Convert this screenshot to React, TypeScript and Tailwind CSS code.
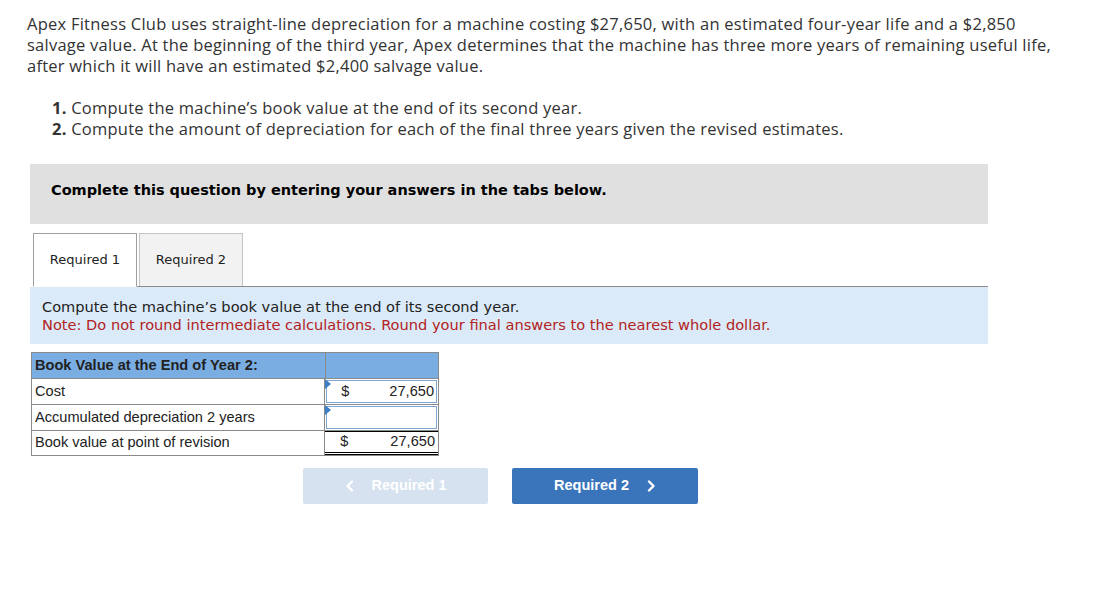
import React from 'react';

const body = { fontFamily: '"Open Sans", "Lato", sans-serif' };
const tahoma = { fontFamily: '"DejaVu Sans", Verdana, sans-serif' };
const arial = { fontFamily: '"Liberation Sans", Arial, sans-serif' };

function Marker() {
  return <span className="absolute left-0 top-0 w-0 h-0 border-t-[5px] border-b-[5px] border-l-[6px] border-t-transparent border-b-transparent border-l-[#3b7fc4]" />;
}

function ValueCell({ value, input }: { value?: string; input?: boolean }) {
  return (
    <div className="relative w-[113px] h-full p-px">
      {input && <Marker />}
      <div className={`flex items-center justify-between h-full pl-[14px] pr-[2px] ${input ? 'border border-[#7fa6d0]' : ''}`}>
        <span>{value ? '$' : ''}</span>
        <span>{value}</span>
      </div>
    </div>
  );
}

function Chevron({ dir }: { dir: 'left' | 'right' }) {
  return (
    <svg width="10" height="12" viewBox="0 0 10 12" fill="none" stroke="currentColor" strokeWidth="2.4" strokeLinecap="round" strokeLinejoin="round">
      {dir === 'right' ? <path d="M3 1.5 L7.5 6 L3 10.5" /> : <path d="M7 1.5 L2.5 6 L7 10.5" />}
    </svg>
  );
}

export default function App() {
  return (
    <div className="w-[1094px] h-[605px] bg-white text-[#333]" style={body}>
      <div className="pl-[27px] pt-[13px] text-[16.5px] leading-[21px] tracking-[0.24px]">
        <p className="text-[#333] whitespace-nowrap">
          Apex Fitness Club uses straight-line depreciation for a machine costing $27,650, with an estimated four-year life and a $2,850<br />
          salvage value. At the beginning of the third year, Apex determines that the machine has three more years of remaining useful life,<br />
          after which it will have an estimated $2,400 salvage value.
        </p>
        <ol className="mt-[21px] pl-[25px]">
          <li><b>1.</b> Compute the machine’s book value at the end of its second year.</li>
          <li><b>2.</b> Compute the amount of depreciation for each of the final three years given the revised estimates.</li>
        </ol>
      </div>

      <div className="ml-[30px] w-[958px] mt-[25px] h-[60px] bg-[#e0e0e0] pl-[21px] pt-[13px]">
        <span className="text-[14.5px] font-bold text-black" style={tahoma}>Complete this question by entering your answers in the tabs below.</span>
      </div>

      <div className="ml-[33px] w-[955px] mt-[9px] flex items-end border-b border-[#8c8c8c] h-[54px]" style={tahoma}>
        <div className="w-[104px] h-[54px] -mb-px bg-white border border-[#a0a0a0] border-b-white flex items-center justify-center text-[13px] text-[#222]">Required 1</div>
        <div className="ml-[2px] w-[104px] h-[53px] bg-[#f2f2f2] border border-[#c4c4c4] border-b-0 flex items-center justify-center text-[13px] text-[#222]">Required 2</div>
      </div>

      <div className="ml-[30px] w-[958px] h-[57px] bg-[#dbeaf8] pl-[12px] pt-[11px] text-[14.6px] leading-[18px]" style={tahoma}>
        <div className="text-[#222]">Compute the machine’s book value at the end of its second year.</div>
        <div className="text-[#b22222]">Note: Do not round intermediate calculations. Round your final answers to the nearest whole dollar.</div>
      </div>

      <div className="ml-[31px] mt-[8px] w-[408px] border border-[#8a8a8a] text-[14.6px] text-[#222]" style={arial}>
        <div className="flex h-[26px] bg-[#7aaee3] border-b border-[#8a8a8a]">
          <div className="w-[294px] border-r border-[#8a8a8a] pl-[3px] flex items-center font-bold">Book Value at the End of Year 2:</div>
          <div className="flex-1" />
        </div>
        <div className="flex h-[26px] border-b border-[#8a8a8a]">
          <div className="w-[294px] border-r border-[#8a8a8a] pl-[3px] flex items-center">Cost</div>
          <ValueCell value="27,650" input />
        </div>
        <div className="flex h-[26px] border-b border-[#8a8a8a]">
          <div className="w-[294px] border-r border-[#8a8a8a] pl-[3px] flex items-center">Accumulated depreciation 2 years</div>
          <ValueCell input />
        </div>
        <div className="flex h-[24px]">
          <div className="w-[294px] border-r border-[#8a8a8a] pl-[3px] flex items-center">Book value at point of revision</div>
          <div className="w-[113px] h-full border-t border-black border-b-[3px] border-b-black border-double">
            <div className="flex items-center justify-between h-full pl-[15px] pr-[3px]">
              <span>$</span>
              <span>27,650</span>
            </div>
          </div>
        </div>
      </div>

      <div className="flex mt-[12px] ml-[303px] gap-[24px] text-[14.5px] font-bold" style={arial}>
        <button className="w-[185px] h-[36px] rounded-[2px] bg-[#d6e2f0] text-white flex items-center justify-center gap-[17px]">
          <Chevron dir="left" />Required 1
        </button>
        <button className="w-[186px] h-[36px] rounded-[2px] bg-[#3a75bb] text-white flex items-center justify-center gap-[17px]">
          Required 2<Chevron dir="right" />
        </button>
      </div>
    </div>
  );
}
